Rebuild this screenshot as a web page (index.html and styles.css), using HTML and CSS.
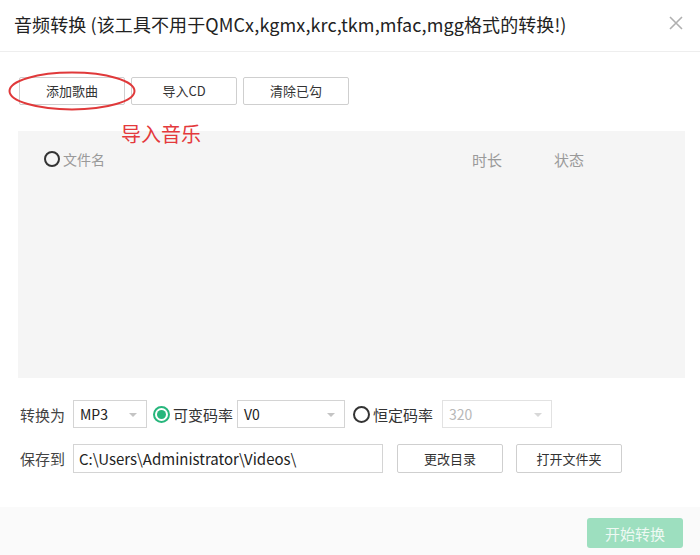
FILE: index.html
```html
<!DOCTYPE html>
<html lang="zh-CN">
<head>
<meta charset="utf-8">
<title>音频转换</title>
<link rel="stylesheet" href="styles.css">
</head>
<body>
<div class="dialog">
  <div class="header">
    <div class="title">音频转换 (该工具不用于QMCx,kgmx,krc,tkm,mfac,mgg格式的转换!)</div>
    <svg class="close" width="14" height="14" viewBox="0 0 14 14"><path d="M1 1L13 13M13 1L1 13" stroke="#b0b0b0" stroke-width="1.6" fill="none"/></svg>
  </div>
  <div class="toolbar">
    <button class="btn">添加歌曲</button>
    <button class="btn">导入CD</button>
    <button class="btn">清除已勾</button>
    <svg class="mark" width="132" height="42" viewBox="0 0 132 42"><ellipse cx="64" cy="20" rx="62.5" ry="18.5" fill="none" stroke="#e0393a" stroke-width="2"/></svg>
    <div class="note">导入音乐</div>
  </div>
  <div class="list">
    <div class="list-head">
      <span class="radio"></span>
      <span class="col-name">文件名</span>
      <span class="col-time">时长</span>
      <span class="col-state">状态</span>
    </div>
  </div>
  <div class="options">
    <div class="row">
      <span class="label">转换为</span>
      <div class="select s-fmt"><span>MP3</span><i class="arrow"></i></div>
      <span class="radio checked"></span>
      <span class="opt">可变码率</span>
      <div class="select s-vbr"><span>V0</span><i class="arrow"></i></div>
      <span class="radio gap"></span>
      <span class="opt">恒定码率</span>
      <div class="select s-cbr disabled"><span>320</span><i class="arrow"></i></div>
    </div>
    <div class="row row2">
      <span class="label">保存到</span>
      <div class="path">C:\Users\Administrator\Videos\</div>
      <button class="btn b2">更改目录</button>
      <button class="btn b3">打开文件夹</button>
    </div>
  </div>
  <div class="footer">
    <button class="start">开始转换</button>
  </div>
</div>
</body>
</html>
```

FILE: styles.css
```css
* { box-sizing: border-box; }
html, body { margin: 0; padding: 0; background: #fff; }
body {
  font-family: "Noto Sans CJK SC", "Noto Sans", sans-serif;
  color: #333;
  width: 700px;
  height: 555px;
  overflow: hidden;
}
.dialog { width: 700px; height: 555px; display: flex; flex-direction: column; }

.header {
  height: 52px;
  border-bottom: 1px solid #eeeeee;
  display: flex;
  align-items: center;
  padding: 0 0 4px 14px;
  position: relative;
}
.title { font-size: 18px; color: #222; letter-spacing: 0.1px; white-space: nowrap; }
.close { position: absolute; left: 669px; top: 16px; }

.toolbar {
  position: relative;
  display: flex;
  gap: 6px;
  padding-left: 19px;
  margin-top: 25px;
}
.btn {
  width: 106px;
  height: 28px;
  border: 1px solid #cfcfcf;
  border-radius: 2px;
  background: #fff;
  font-family: inherit;
  font-size: 13px;
  color: #333;
  padding: 0;
  line-height: 26px;
}
.mark { position: absolute; left: 8px; top: -6px; pointer-events: none; }
.note {
  position: absolute;
  left: 121px;
  top: 44px;
  font-size: 20px;
  color: #e4393c;
  line-height: 26px;
}

.list {
  margin: 26px 0 0 18px;
  width: 667px;
  height: 247px;
  background: #f5f5f5;
}
.list-head {
  display: flex;
  align-items: center;
  height: 20px;
  margin-top: 18px;
  padding-left: 26px;
  font-size: 14px;
  color: #9a9a9a;
}
.radio {
  width: 16px;
  height: 16px;
  border: 2px solid #333;
  border-radius: 50%;
  flex: none;
  position: relative;
}
.col-name { margin-left: 3px; }
.col-time { margin-left: auto; font-size: 15px; }
.col-state { margin-left: 52px; margin-right: 101px; font-size: 15px; }

.options { margin-top: 22px; padding-left: 20px; display: flex; flex-direction: column; gap: 16px; }
.row { display: flex; align-items: center; height: 28px; }
.row2 { height: 29px; }
.label { font-size: 15px; color: #444; width: 53px; }
.opt { font-size: 15px; color: #333; margin-left: 3px; margin-right: 4px; }
.select {
  height: 28px;
  border: 1px solid #d4d4d4;
  background: #fff;
  display: flex;
  align-items: center;
  padding-left: 6px;
  font-size: 14px;
  color: #222;
  position: relative;
  flex: none;
}
.select .arrow {
  position: absolute;
  top: 12px;
  right: 9px;
  width: 0; height: 0;
  border-left: 4px solid transparent;
  border-right: 4px solid transparent;
  border-top: 4px solid #c4c4c4;
}
.s-fmt { width: 74px; margin-right: 6px; }
.s-vbr { width: 108px; margin-right: 8px; }
.s-cbr { width: 110px; margin-left: 5px; }
.disabled { color: #b8b8b8; border-color: #e2e2e2; }
.disabled .arrow { border-top-color: #d8d8d8; }
.radio.checked { border-color: #27b67c; width: 17px; height: 17px; }
.radio.checked::after {
  content: "";
  position: absolute;
  left: 2px; top: 2px;
  width: 9px; height: 9px;
  border-radius: 50%;
  background: #27b67c;
}
.radio.gap { width: 17px; height: 17px; }

.path {
  width: 310px;
  height: 29px;
  border: 1px solid #d4d4d4;
  padding-left: 5px;
  font-size: 15px;
  color: #222;
  line-height: 27px;
  flex: none;
}
.b2 { margin-left: 14px; height: 29px; }
.b3 { margin-left: 13px; height: 29px; }

.footer {
  margin-top: auto;
  height: 48px;
  background: #fafafa;
  display: flex;
  justify-content: flex-end;
  align-items: flex-start;
  padding: 11px 17px 0 0;
}
.start {
  width: 96px;
  height: 30px;
  border: none;
  border-radius: 3px;
  background: #9ddfbf;
  color: #eef9f3;
  font-family: inherit;
  font-size: 15px;
  padding: 0;
}
```
